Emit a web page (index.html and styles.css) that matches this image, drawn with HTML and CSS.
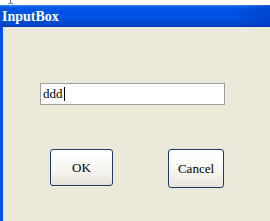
FILE: index.html
```html
<!DOCTYPE html>
<html>
<head>
<meta charset="utf-8">
<link rel="stylesheet" href="styles.css">
</head>
<body>
<div class="strip"><span class="stub"></span></div>
<div class="window">
  <div class="titlebar"><span class="title">InputBox</span></div>
  <div class="client">
    <div class="field"><span class="val">ddd</span><span class="caret"></span></div>
    <div class="buttons">
      <div class="btn ok">OK</div>
      <div class="btn cancel">Cancel</div>
    </div>
  </div>
</div>
</body>
</html>
```
FILE: styles.css
```css
html, body {
  margin: 0;
  padding: 0;
  width: 270px;
  height: 221px;
  overflow: hidden;
  background: #ffffff;
  font-family: "Liberation Serif", "DejaVu Serif", serif;
}
.strip {
  height: 5px;
  overflow: hidden;
  position: relative;
}
.stub {
  position: absolute;
  left: 10px;
  top: 0;
  width: 1px;
  height: 3px;
  background: #4a6a9a;
}
.stub::after {
  content: "";
  position: absolute;
  left: -2px;
  top: 3px;
  width: 5px;
  height: 1px;
  background: #7a90b0;
}
.window {
  display: flex;
  flex-direction: column;
  height: 216px;
}
.titlebar {
  height: 22px;
  flex: none;
  background: linear-gradient(to bottom, #3d8cf5 0px, #0a5fe8 2px, #0055e5 5px, #0052e0 14px, #0046cc 19px, #003bb8 22px);
  position: relative;
  display: flex;
  align-items: center;
}
.titlebar::after {
  content: "";
  position: absolute;
  right: 0;
  top: 0;
  bottom: 0;
  width: 40px;
  background: linear-gradient(to right, rgba(0,60,200,0), rgba(0,50,190,0.5));
}
.title {
  color: #ffffff;
  font-weight: bold;
  font-size: 14px;
  padding-left: 2px;
  padding-top: 1px;
}
.client {
  flex: 1;
  background: #ece9d8;
  border-left: 3px solid #0a50e0;
  padding-top: 56px;
}
.field {
  margin-left: 37px;
  width: 181px;
  height: 20px;
  background: #ffffff;
  border: 1px solid #9a9e9c;
  display: flex;
  align-items: center;
  padding-left: 2px;
}
.val {
  font-size: 13px;
  color: #000;
}
.caret {
  width: 1px;
  height: 14px;
  background: #000;
  margin-left: 1px;
}
.buttons {
  display: flex;
  align-items: flex-start;
  margin-top: 44px;
  margin-left: 47px;
}
.btn {
  box-sizing: border-box;
  border: 1px solid #1c3a6a;
  border-radius: 3px;
  background: linear-gradient(to bottom, #ffffff 0%, #f6f5f0 60%, #e6e3d6 100%);
  display: flex;
  align-items: center;
  justify-content: center;
  font-size: 13px;
  font-weight: normal;
  color: #000;
}
.ok {
  width: 63px;
  height: 37px;
}
.cancel {
  width: 56px;
  height: 39px;
  margin-left: 55px;
}
```
